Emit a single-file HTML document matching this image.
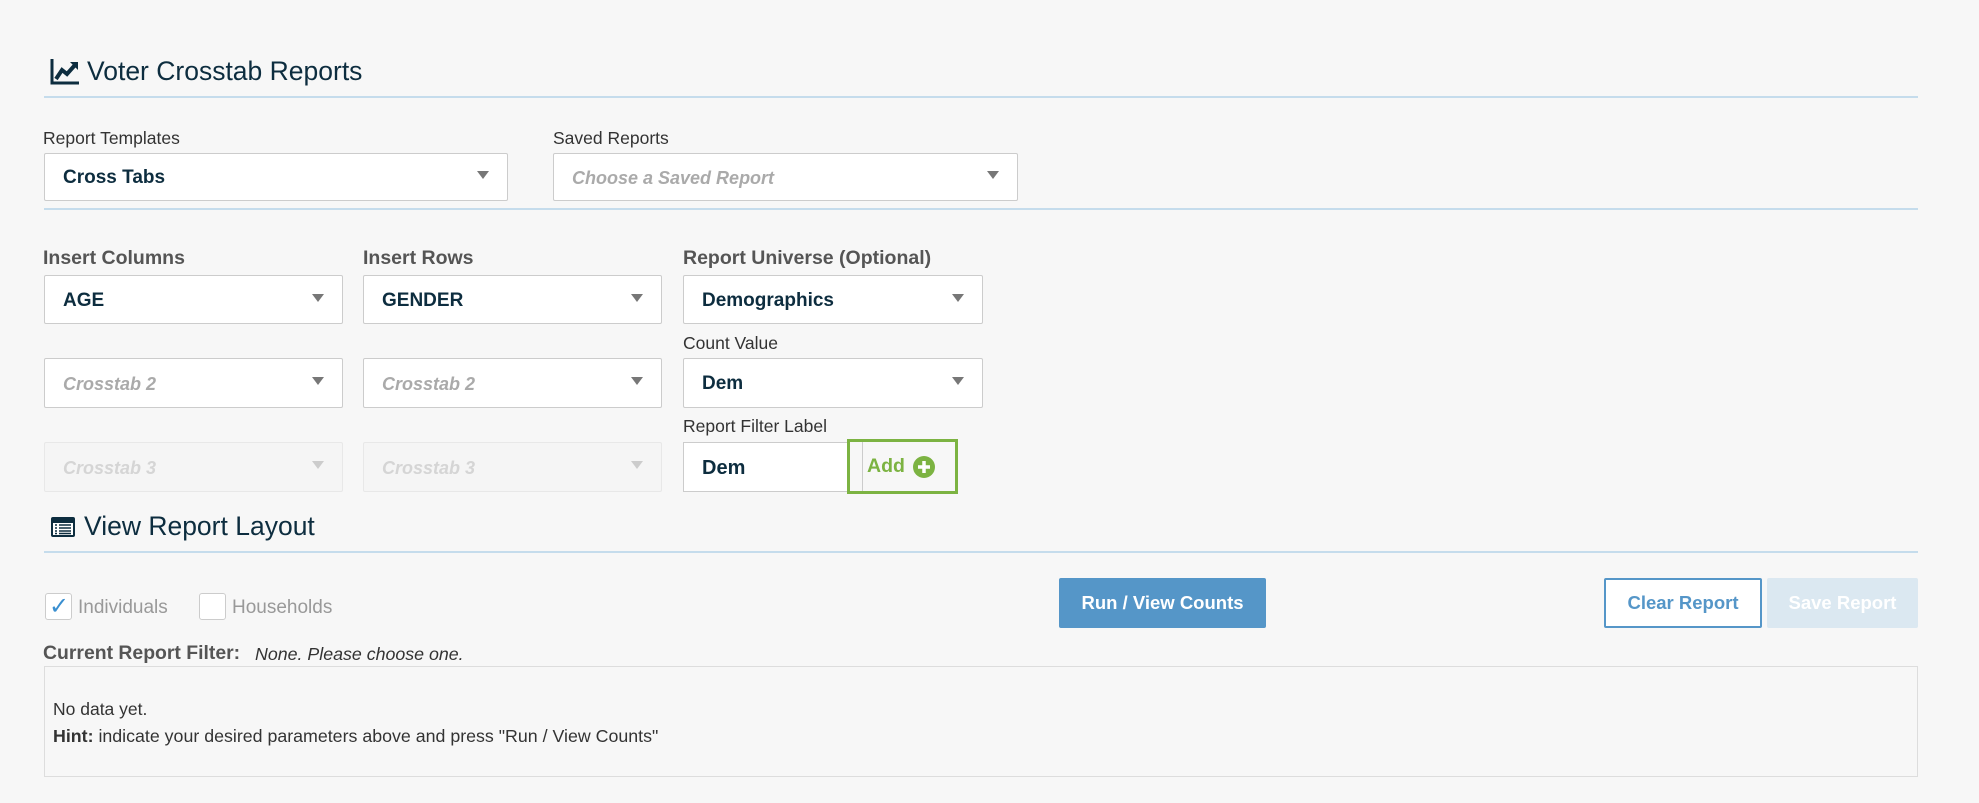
<!DOCTYPE html>
<html><head><meta charset="utf-8"><style>
*{box-sizing:border-box;margin:0;padding:0}
body{width:1979px;height:803px;background:#f7f7f7;font-family:"Liberation Sans",Arial,sans-serif;color:#0d2d3f;position:relative;overflow:hidden}
.a{position:absolute}
.h{font-size:26.5px;color:#0d2d3f;display:flex;align-items:center;gap:8px}
.hr{position:absolute;left:44px;width:1874px;height:2px;background:#c5dcec}
.lbl{font-size:17.5px;color:#333}
.blbl{font-size:19.5px;font-weight:bold;color:#555}
.sel{position:absolute;background:#fff;border:1px solid #ccc;border-radius:2px;display:flex;align-items:center;padding-left:18px;padding-top:2px;font-size:19px;font-weight:bold;color:#0d2d3f}
.sel::after{content:"";position:absolute;right:18px;top:50%;margin-top:-6px;border-left:6px solid transparent;border-right:6px solid transparent;border-top:8px solid #777}
.ph{font-style:italic;color:#aaa;font-weight:bold;font-size:18px}
.dis{background:#f5f5f5;border-color:#e8e8e8}
.dis .ph{color:#d5d5d5}
.dis::after{border-top-color:#ccc}
.btn{position:absolute;display:flex;align-items:center;justify-content:center;font-size:18.5px;font-weight:bold;border-radius:2px}
.cb{position:absolute;width:27px;height:27px;border:1px solid #ccc;border-radius:3px;background:#fff}
</style></head><body>
<div class="a h" style="left:50px;top:56px">
<svg width="29" height="27" viewBox="0 0 29 27"><path d="M2 1V25H29" stroke="#0d2d3f" stroke-width="3" fill="none"/><path d="M6 21L12 12L17 16L25 7" stroke="#0d2d3f" stroke-width="4" fill="none"/><path d="M20 4H28V12Z" fill="#0d2d3f"/></svg>
<span>Voter Crosstab Reports</span></div>
<div class="hr" style="top:96px"></div>
<div class="a lbl" style="left:43px;top:128px">Report Templates</div>
<div class="a lbl" style="left:553px;top:128px">Saved Reports</div>
<div class="sel" style="left:44px;top:153px;width:464px;height:48px">Cross Tabs</div>
<div class="sel" style="left:553px;top:153px;width:465px;height:48px"><span class="ph">Choose a Saved Report</span></div>
<div class="hr" style="top:208px"></div>
<div class="a blbl" style="left:43px;top:247px">Insert Columns</div>
<div class="a blbl" style="left:363px;top:247px">Insert Rows</div>
<div class="a blbl" style="left:683px;top:247px">Report Universe (Optional)</div>
<div class="sel" style="left:44px;top:275px;width:299px;height:49px">AGE</div>
<div class="sel" style="left:363px;top:275px;width:299px;height:49px">GENDER</div>
<div class="sel" style="left:683px;top:275px;width:300px;height:49px">Demographics</div>
<div class="a lbl" style="left:683px;top:333px">Count Value</div>
<div class="sel" style="left:44px;top:358px;width:299px;height:50px"><span class="ph">Crosstab 2</span></div>
<div class="sel" style="left:363px;top:358px;width:299px;height:50px"><span class="ph">Crosstab 2</span></div>
<div class="sel" style="left:683px;top:358px;width:300px;height:50px">Dem</div>
<div class="a lbl" style="left:683px;top:416px">Report Filter Label</div>
<div class="sel dis" style="left:44px;top:442px;width:299px;height:50px"><span class="ph">Crosstab 3</span></div>
<div class="sel dis" style="left:363px;top:442px;width:299px;height:50px"><span class="ph">Crosstab 3</span></div>
<div class="a" style="left:683px;top:442px;width:166px;height:50px;background:#fff;border:1px solid #ccc;display:flex;align-items:center;padding-left:18px;padding-top:2px;font-size:20px;font-weight:bold">Dem</div>
<div class="a" style="left:847px;top:439px;width:111px;height:55px;border:3px solid #7cb342;background:#f7f7f7;display:flex;align-items:center;padding-left:17px;font-size:19.5px;font-weight:bold;color:#7cb342;gap:8px"><span style="position:absolute;left:12px;top:0;bottom:0;border-left:1px solid #ccc"></span>Add <svg width="22" height="22" viewBox="0 0 22 22"><circle cx="11" cy="11" r="11" fill="#7cb342"/><path d="M11 5V17M5 11H17" stroke="#fff" stroke-width="3.5"/></svg></div>
<div class="a h" style="left:50px;top:511px">
<svg width="26" height="22" viewBox="0 0 26 22"><rect x="1" y="1" width="24" height="20" rx="2" fill="#0d2d3f"/><rect x="3" y="7" width="20" height="12" fill="#fff"/><path d="M5 9h2M5 12h2M5 15h2M5 17.5h2M9 9h12M9 12h12M9 15h12M9 17.5h12" stroke="#0d2d3f" stroke-width="1.6"/></svg>
<span>View Report Layout</span></div>
<div class="hr" style="top:551px"></div>
<div class="cb" style="left:45px;top:593px"></div>
<div class="a" style="left:49px;top:592px;font-size:24px;color:#3a8fd0">✓</div>
<div class="a" style="left:78px;top:597px;font-size:19px;color:#999">Individuals</div>
<div class="cb" style="left:199px;top:593px"></div>
<div class="a" style="left:232px;top:597px;font-size:19px;color:#999">Households</div>
<div class="btn" style="left:1059px;top:578px;width:207px;height:50px;background:#5596c8;color:#fff">Run / View Counts</div>
<div class="btn" style="left:1604px;top:578px;width:158px;height:50px;border:2px solid #5596c8;background:#fff;color:#5596c8">Clear Report</div>
<div class="btn" style="left:1767px;top:578px;width:151px;height:50px;background:#dbe8f1;color:#fff">Save Report</div>
<div class="a" style="left:43px;top:642px;font-size:19.4px;font-weight:bold;color:#555">Current Report Filter:</div>
<div class="a" style="left:255px;top:644px;font-size:17.8px;font-style:italic;color:#333">None. Please choose one.</div>
<div class="a" style="left:44px;top:666px;width:1874px;height:111px;border:1px solid #ddd;background:#f7f7f7"></div>
<div class="a" style="left:53px;top:699px;font-size:17.5px;color:#333">No data yet.</div>
<div class="a" style="left:53px;top:726px;font-size:17.8px;color:#333"><b>Hint:</b> indicate your desired parameters above and press "Run / View Counts"</div>
</body></html>
